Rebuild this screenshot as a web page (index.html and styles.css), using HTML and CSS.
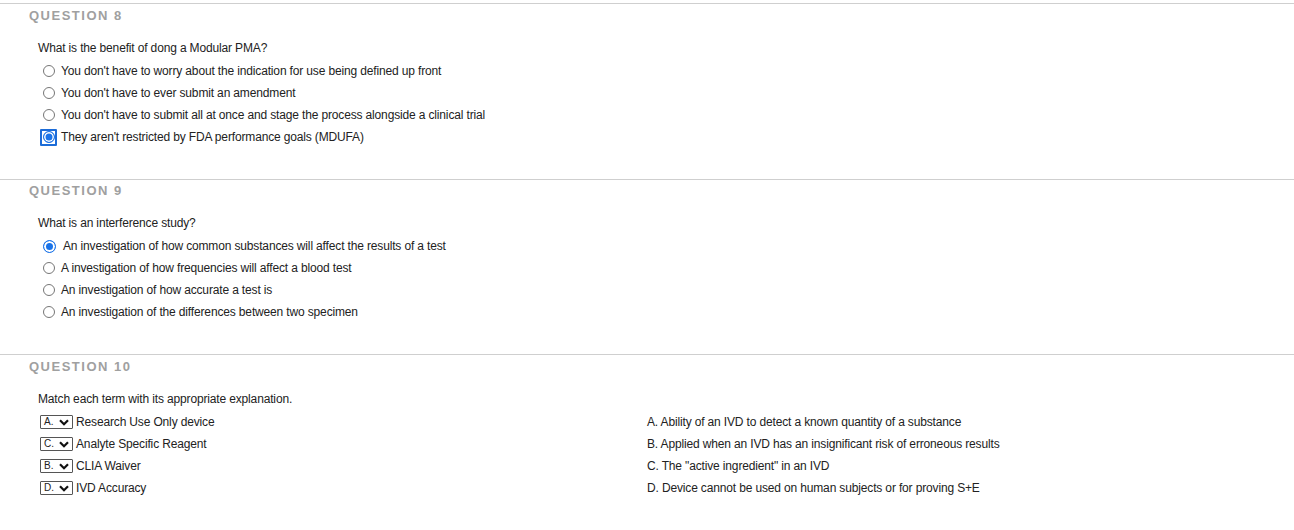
FILE: index.html
```html
<!DOCTYPE html>
<html>
<head>
<meta charset="utf-8">
<link rel="stylesheet" href="styles.css">
</head>
<body>
<section class="question">
  <h2 class="q-title">QUESTION 8</h2>
  <div class="q-body">
    <p class="q-text">What is the benefit of dong a Modular PMA?</p>
    <ul class="options">
      <li class="option"><span class="radio"></span><span class="label">You don't have to worry about the indication for use being defined up front</span></li>
      <li class="option"><span class="radio"></span><span class="label">You don't have to ever submit an amendment</span></li>
      <li class="option"><span class="radio"></span><span class="label">You don't have to submit all at once and stage the process alongside a clinical trial</span></li>
      <li class="option"><span class="focus-ring"><span class="radio checked"></span></span><span class="label">They aren't restricted by FDA performance goals (MDUFA)</span></li>
    </ul>
  </div>
</section>
<section class="question q-mid">
  <h2 class="q-title">QUESTION 9</h2>
  <div class="q-body">
    <p class="q-text">What is an interference study?</p>
    <ul class="options">
      <li class="option"><span class="radio checked"></span><span class="label">An investigation of how common substances will affect the results of a test</span></li>
      <li class="option"><span class="radio"></span><span class="label">A investigation of how frequencies will affect a blood test</span></li>
      <li class="option"><span class="radio"></span><span class="label">An investigation of how accurate a test is</span></li>
      <li class="option"><span class="radio"></span><span class="label">An investigation of the differences between two specimen</span></li>
    </ul>
  </div>
</section>
<section class="question">
  <h2 class="q-title">QUESTION 10</h2>
  <div class="q-body">
    <p class="q-text">Match each term with its appropriate explanation.</p>
    <div class="match">
      <ul class="terms">
        <li class="term"><span class="select"><span class="sel-val">A.</span><svg class="chev" viewBox="0 0 10 7" width="10" height="7"><path d="M1 1.2 L5 5.2 L9 1.2" fill="none" stroke="#111" stroke-width="2.2"/></svg></span><span class="label">Research Use Only device</span></li>
        <li class="term"><span class="select"><span class="sel-val">C.</span><svg class="chev" viewBox="0 0 10 7" width="10" height="7"><path d="M1 1.2 L5 5.2 L9 1.2" fill="none" stroke="#111" stroke-width="2.2"/></svg></span><span class="label">Analyte Specific Reagent</span></li>
        <li class="term"><span class="select"><span class="sel-val">B.</span><svg class="chev" viewBox="0 0 10 7" width="10" height="7"><path d="M1 1.2 L5 5.2 L9 1.2" fill="none" stroke="#111" stroke-width="2.2"/></svg></span><span class="label">CLIA Waiver</span></li>
        <li class="term"><span class="select"><span class="sel-val">D.</span><svg class="chev" viewBox="0 0 10 7" width="10" height="7"><path d="M1 1.2 L5 5.2 L9 1.2" fill="none" stroke="#111" stroke-width="2.2"/></svg></span><span class="label">IVD Accuracy</span></li>
      </ul>
      <ul class="answers">
        <li class="answer">A. Ability of an IVD to detect a known quantity of a substance</li>
        <li class="answer">B. Applied when an IVD has an insignificant risk of erroneous results</li>
        <li class="answer">C. The "active ingredient" in an IVD</li>
        <li class="answer">D. Device cannot be used on human subjects or for proving S+E</li>
      </ul>
    </div>
  </div>
</section>
</body>
</html>
```
FILE: styles.css
```css
html, body {
  margin: 0;
  padding: 0;
  background: #fff;
}
body {
  padding-top: 3px;
  font-family: "Liberation Sans", Arial, sans-serif;
  font-size: 12px;
  letter-spacing: -0.15px;
  color: #222;
}
.question {
  border-top: 1px solid #cfcfcf;
  padding: 0 0 32px 29px;
}
.question + .question {
  margin-top: -1px;
}
.q-title {
  margin: 4px 0 0 0;
  font-size: 13px;
  line-height: 16px;
  font-weight: bold;
  letter-spacing: 1.5px;
  color: #a0a0a0;
}
.q-mid .q-title {
  margin-top: 3px;
}
.q-body {
  padding-left: 9px;
}
.q-text {
  margin: 16px 0 4px 0;
  line-height: 16px;
}
.options, .terms, .answers {
  list-style: none;
  margin: 0;
  padding: 0;
}
.option {
  display: flex;
  align-items: center;
  height: 22px;
  padding-left: 5px;
}
.radio {
  box-sizing: border-box;
  width: 12px;
  height: 12px;
  border: 1px solid #767676;
  border-radius: 50%;
  background: #fff;
  flex: none;
  margin-right: 6px;
}
.radio.checked {
  width: 13px;
  height: 13px;
  border: 1px solid #1a73e8;
  background: #1a73e8;
  box-shadow: inset 0 0 0 2px #fff;
  margin-left: -0.5px;
  margin-right: 7.5px;
}
.focus-ring {
  box-sizing: border-box;
  flex: none;
  width: 17px;
  height: 17px;
  margin-left: -3px;
  margin-right: 4px;
  border: 2px solid #1c6cd8;
  border-radius: 1px;
  display: flex;
  align-items: center;
  justify-content: center;
}
.focus-ring .radio.checked {
  margin: 0;
  width: 12px;
  height: 12px;
  border: 1.5px solid #1a73e8;
  box-shadow: inset 0 0 0 1.5px #fff;
}
.match {
  display: grid;
  grid-template-columns: 609px 1fr;
}
.term {
  display: flex;
  align-items: center;
  height: 22px;
  padding-left: 2px;
}
.select {
  box-sizing: border-box;
  display: inline-flex;
  align-items: center;
  justify-content: space-between;
  width: 33px;
  height: 14px;
  border: 1px solid #555;
  border-radius: 1px;
  padding: 0 3px 0 3px;
  margin-right: 3px;
  background: #fff;
}
.sel-val {
  font-size: 10px;
  line-height: 12px;
  letter-spacing: 0;
  color: #222;
}
.chev {
  display: block;
}
.answer {
  height: 22px;
  line-height: 22px;
}
```
